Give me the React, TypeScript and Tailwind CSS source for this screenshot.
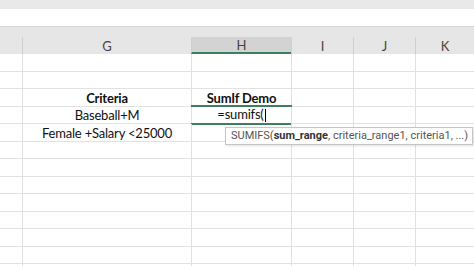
import React from "react";

const cols = [
  { key: "rh", w: "w-[22px]" },
  { key: "G", w: "w-[169px]" },
  { key: "H", w: "w-[100px]" },
  { key: "I", w: "w-[62px]" },
  { key: "J", w: "w-[62px]" },
  { key: "K", w: "flex-1" },
];

type Cell = { text?: React.ReactNode; bold?: boolean; active?: boolean };

const rows: Record<number, Record<string, Cell>> = {
  2: { G: { text: "Criteria", bold: true }, H: { text: "SumIf Demo", bold: true } },
  3: {
    G: { text: "Baseball+M" },
    H: {
      text: (
        <span className="relative">
          =sumifs(
          <span className="inline-block w-px h-[13px] bg-black align-[-3px] ml-px" />
        </span>
      ),
      active: true,
    },
  },
  4: { G: { text: "Female +Salary <25000" } },
};

export default function App() {
  const rowIdx = Array.from({ length: 13 }, (_, i) => i);
  return (
    <div
      className="w-[474px] h-[266px] overflow-hidden bg-white relative"
      style={{ fontFamily: "Lato, 'Liberation Sans', sans-serif" }}
    >
      <div className="h-[9px] bg-[#e9e9e9]" />
      <div className="h-[18px] bg-white border-b border-[#d6d6d6]" />
      <div className="h-[10px] bg-[#e6e6e6]" />
      <div className="flex h-[17px] bg-[#e6e6e6] text-[13px] text-[#444]">
        {cols.map((c) => (
          <div
            key={c.key}
            className={`${c.w} shrink-0 flex items-center justify-center pt-[2px] ${
              c.key === "rh" ? "" : "border-l border-[#cfcfcf]"
            } ${c.key === "H" ? "bg-[#d3d3d3] border-b-2 border-b-[#3f7d5e]" : ""}`}
          >
            {c.key === "rh" ? "" : c.key}
          </div>
        ))}
      </div>
      {rowIdx.map((r) => (
        <div key={r} className="flex h-[17.5px] text-[13px] tracking-[-0.2px] text-[#111]">
          {cols.map((c) => {
            const cell = rows[r]?.[c.key];
            return (
              <div
                key={c.key}
                className={`${c.w} shrink-0 relative flex items-end justify-center pb-[1px] leading-none border-b border-[#e2e2e2] ${
                  c.key === "rh" ? "" : "border-l border-l-[#e0e0e0]"
                } ${cell?.bold ? "font-bold" : ""}`}
              >
                {cell?.text}
                {cell?.active && (
                  <div className="absolute left-[-1px] right-[-1px] top-[-2px] bottom-[-2px] border-t-2 border-b-2 border-[#3f7d5e]" />
                )}
              </div>
            );
          })}
        </div>
      ))}
      <div
        className="absolute left-[225px] top-[127px] w-[248px] h-[18px] bg-white border border-[#c6c6c6] shadow-[1px_1px_2px_rgba(0,0,0,0.12)] flex items-center pl-[5px] text-[11px] text-[#555] whitespace-nowrap"
        style={{ fontFamily: "Roboto, 'Noto Sans', sans-serif" }}
      >
        SUMIFS(<span className="font-bold text-[#333]">sum_range</span>, criteria_range1, criteria1, ...)
      </div>
    </div>
  );
}
